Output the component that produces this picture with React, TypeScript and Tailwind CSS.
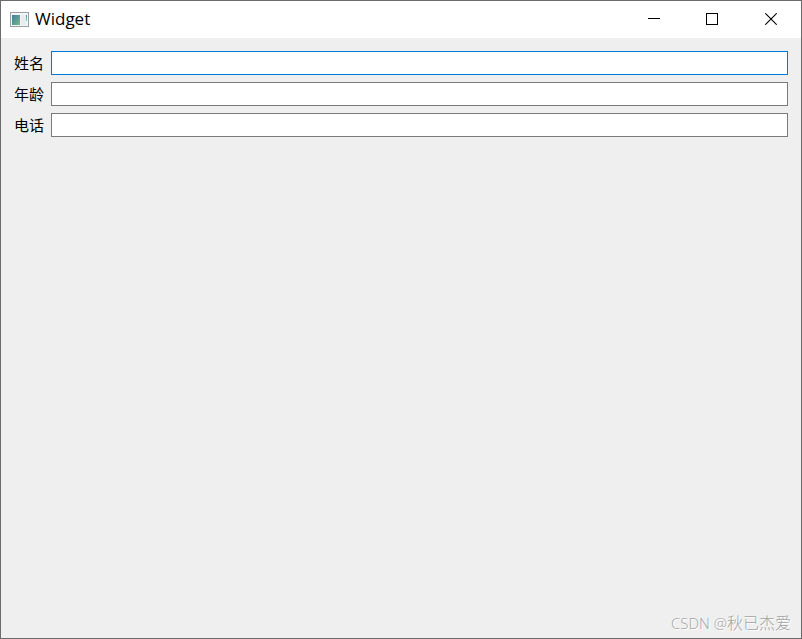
const fields = [
    { id: "name", label: "姓名", border: "border-[#0078d7]" },
    { id: "age", label: "年龄", border: "border-[#7a7a7a]" },
    { id: "phone", label: "电话", border: "border-[#7a7a7a]" },
];

export default function App() {
    return (
        <div className="flex min-h-screen flex-col border border-[#6b6b6b] bg-[#efefef] font-['Noto_Sans','Noto_Sans_CJK_SC',sans-serif] text-black">
            <TitleBar />

            <form className="flex flex-col gap-[7px] px-[13px] pt-[13px]">
                {fields.map((field) => (
                    <div key={field.id} className="flex h-6 items-center gap-[7px]">
                        <label htmlFor={field.id} className="shrink-0 text-[15px] leading-6">
                            {field.label}
                        </label>
                        <input
                            id={field.id}
                            type="text"
                            className={`h-6 min-w-0 flex-1 border bg-white px-1 text-[15px] outline-none ${field.border}`}
                        />
                    </div>
                ))}
            </form>

            <footer className="mt-auto flex items-baseline justify-end gap-0 pr-[10px] pb-[3px] text-base leading-6 font-light text-[#a3a3a3] [text-shadow:1px_1px_0_#ffffff]">
                <span className="font-['Open_Sans','Noto_Sans',sans-serif] text-[15px] whitespace-pre">CSDN @</span>
                <span>秋已杰爱</span>
            </footer>
        </div>
    );
}

function TitleBar() {
    return (
        <header className="flex h-[37px] items-center bg-white pb-px">
            <AppIcon />
            <h1 className="ml-[6px] flex-1 font-['Open_Sans','Noto_Sans',sans-serif] text-[17px] leading-6">Widget</h1>
            <button type="button" aria-label="Minimize" className="flex h-full w-[58px] items-center justify-center">
                <svg width="12" height="12" viewBox="0 0 12 12" shapeRendering="crispEdges">
                    <path d="M0 5.5H12" stroke="black" />
                </svg>
            </button>
            <button type="button" aria-label="Maximize" className="flex h-full w-[58px] items-center justify-center">
                <svg width="12" height="12" viewBox="0 0 12 12" fill="none" shapeRendering="crispEdges">
                    <rect x="0.5" y="0.5" width="11" height="11" stroke="black" />
                </svg>
            </button>
            <button type="button" aria-label="Close" className="flex h-full w-[60px] items-center justify-center">
                <svg width="12" height="12" viewBox="0 0 12 12">
                    <path d="M0.3 0.3L11.7 11.7M11.7 0.3L0.3 11.7" stroke="black" strokeWidth="1.1" />
                </svg>
            </button>
        </header>
    );
}

function AppIcon() {
    return (
        <svg width="19" height="15" viewBox="0 0 19 15" className="ml-[9px]">
            <defs>
                <linearGradient id="pane" x1="0" y1="0" x2="1" y2="1">
                    <stop offset="0" stopColor="#4878a4" />
                    <stop offset="1" stopColor="#6fbd88" />
                </linearGradient>
                <linearGradient id="strip" x1="0" y1="0" x2="0" y2="1">
                    <stop offset="0" stopColor="#5b8fae" />
                    <stop offset="1" stopColor="#8fcca6" />
                </linearGradient>
            </defs>
            <rect x="0.5" y="0.5" width="18" height="14" fill="#f5f6f8" stroke="#9a9fa4" />
            <rect x="2" y="3" width="8" height="10" fill="url(#pane)" />
            <rect x="11" y="3" width="5" height="10" fill="#e9ebee" />
            <rect x="16" y="3" width="1" height="6" fill="url(#strip)" />
        </svg>
    );
}
